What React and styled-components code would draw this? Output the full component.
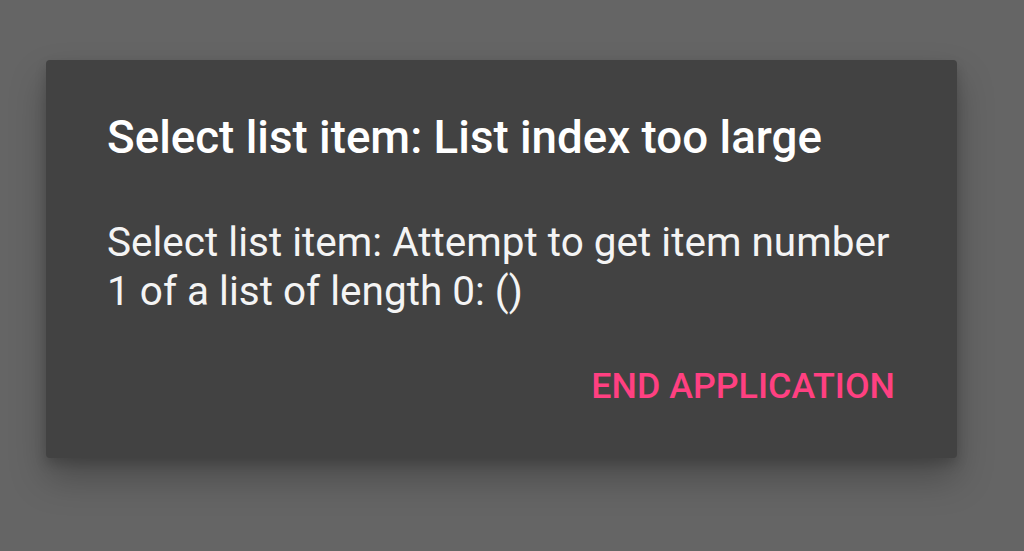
import React from "react";
import styled, { createGlobalStyle } from "styled-components";

const GlobalStyle = createGlobalStyle`
  html, body {
    margin: 0;
    padding: 0;
    background: #656565;
    font-family: Roboto, "Noto Sans", sans-serif;
  }
`;

const Screen = styled.div`
  width: 1024px;
  height: 551px;
  box-sizing: border-box;
  padding: 60px 67px 0 46px;
  background: #656565;
  overflow: hidden;
`;

const Dialog = styled.div`
  width: 911px;
  height: 398px;
  box-sizing: border-box;
  padding: 50px 62px 0 61px;
  background: #424242;
  border-radius: 4px;
  box-shadow: 0 20px 36px rgba(0, 0, 0, 0.26), 0 6px 12px rgba(0, 0, 0, 0.16);
  display: flex;
  flex-direction: column;
`;

const Title = styled.h2`
  margin: 0;
  font-size: 45.7px;
  font-weight: 500;
  line-height: 56px;
  color: #ffffff;
  white-space: nowrap;
`;

const Message = styled.p`
  margin: 52px 0 0;
  font-size: 40.5px;
  font-weight: 400;
  line-height: 49px;
  color: #f4f4f4;
`;

const Actions = styled.div`
  display: flex;
  justify-content: flex-end;
  margin-top: 48px;
`;

const ActionButton = styled.button`
  border: none;
  background: none;
  padding: 0;
  font-family: inherit;
  font-size: 35.8px;
  font-weight: 500;
  line-height: 44px;
  color: #ff4081;
  cursor: pointer;
`;

export default function App() {
  return (
    <>
      <GlobalStyle />
      <Screen>
        <Dialog>
          <Title>Select list item: List index too large</Title>
          <Message>
            Select list item: Attempt to get item number 1 of a list of length 0: ()
          </Message>
          <Actions>
            <ActionButton>END APPLICATION</ActionButton>
          </Actions>
        </Dialog>
      </Screen>
    </>
  );
}
